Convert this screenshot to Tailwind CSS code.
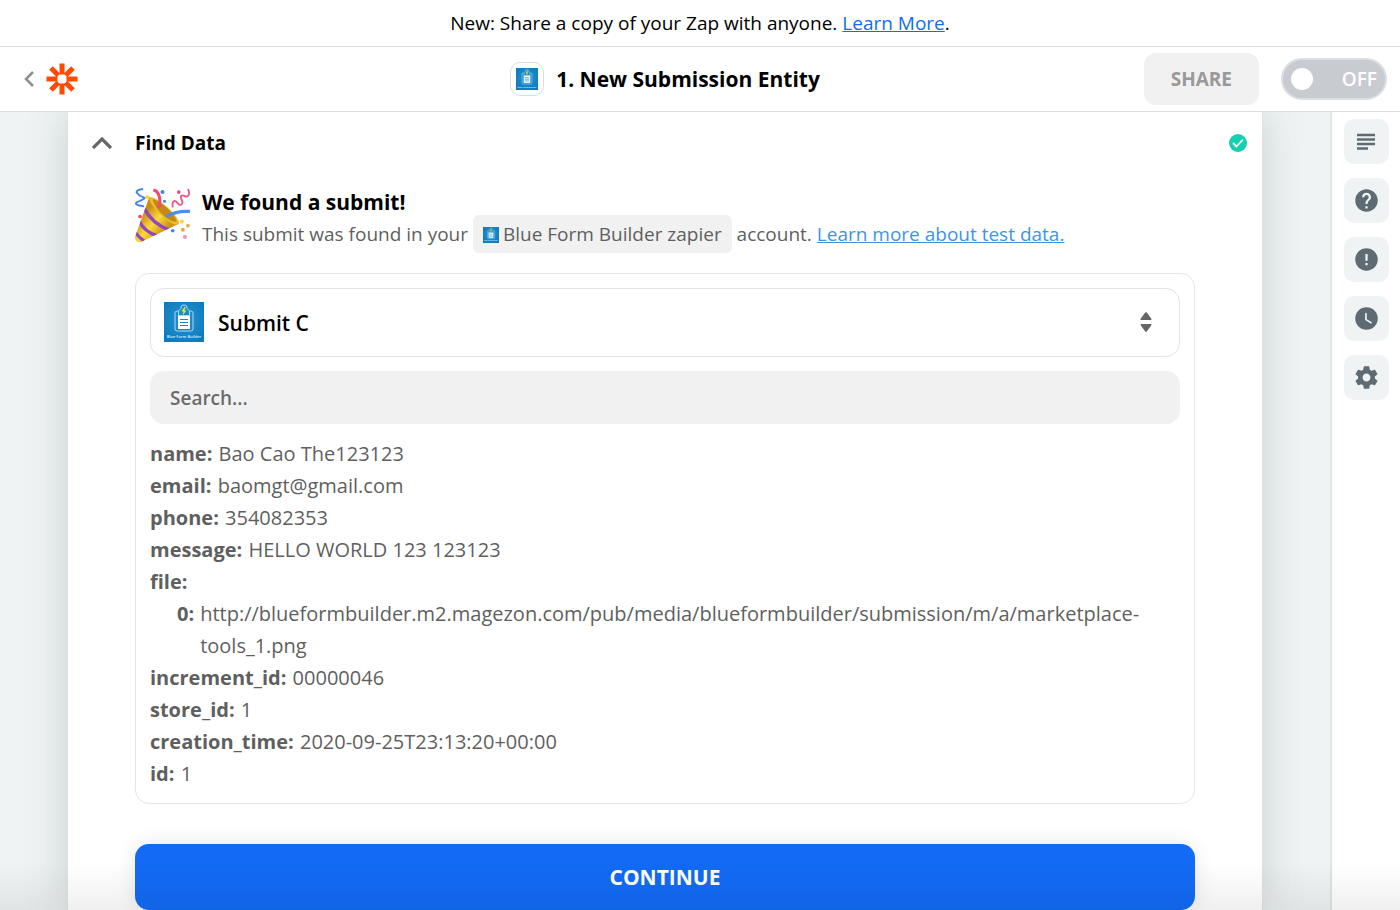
<!DOCTYPE html>
<html lang="en">
  <head>
    <meta charset="UTF-8" />
    <meta name="viewport" content="width=device-width, initial-scale=1.0" />
    <title>New Submission Entity | Zapier</title>
    <script src="https://cdn.jsdelivr.net/npm/@tailwindcss/browser@4"></script>
  </head>
  <body
    class="flex min-h-screen flex-col overflow-x-hidden bg-[#eff3f4] font-['Open_Sans','Liberation_Sans',sans-serif] text-[20px] leading-8 text-black"
  >
    <!-- SHARED ICONS -->
    <svg class="absolute size-0" aria-hidden="true">
      <defs>
        <radialGradient id="logo-bg" cx="50%" cy="45%" r="65%">
          <stop offset="0" stop-color="#2493d3" />
          <stop offset="1" stop-color="#0d7abb" />
        </radialGradient>
      </defs>
      <symbol id="form-logo" viewBox="0 0 40 40">
        <rect width="40" height="40" fill="url(#logo-bg)" />
        <path
          d="M14 9h-1a2 2 0 0 0-2 2v16a2 2 0 0 0 2 2h14a2 2 0 0 0 2-2V11a2 2 0 0 0-2-2h-1"
          fill="none"
          stroke="#a9dbf5"
        />
        <path d="M14 13h12v14H14z" fill="#fff" />
        <path
          d="M14.5 13.5V9L17 6.500V5q0-2 3-2t3 2v1.500L25.500 9v4.500z"
          fill="#1d8bcb"
          stroke="#a9dbf5"
        />
        <path d="M20.500 5 17.500 9.500h2l-.8 4 3.600-5h-2L21.600 5z" fill="#f4ea2a" />
        <path d="M16 17.500h8M16 20.500h8M16 23.500h8" stroke="#1b87c7" stroke-width="1.200" />
        <text
          x="20"
          y="36"
          text-anchor="middle"
          font-family="Open Sans, sans-serif"
          font-size="4"
          font-weight="600"
          fill="#d4effc"
        >
          Blue Form Builder
        </text>
      </symbol>
    </svg>

    <!-- BANNER -->
    <div class="border-b border-[#d9dfe2] bg-white py-[7px] text-center text-[19px]">
      New: Share a copy of your Zap with anyone.
      <a href="#" class="text-[#136bf5] underline">Learn More</a>.
    </div>

    <!-- HEADER -->
    <header class="relative z-10 flex h-[65px] items-center border-b border-[#d9dfe2] bg-white pr-[13px] pl-6">
      <div class="flex flex-1 items-center gap-3">
        <a href="#" aria-label="Back">
          <svg class="h-4 w-[10px]" viewBox="0 0 10 16" fill="none" stroke="#8f8f8f" stroke-width="2.5">
            <path d="M9 1 2 8l7 7" />
          </svg>
        </a>
        <a href="#" aria-label="Zapier">
          <svg class="size-8" viewBox="0 0 32 32" stroke="#ff4a00" stroke-width="5">
            <path
              d="M16 .5v11M16 20.500v11M.5 16h11M20.500 16h11M5 5l7.500 7.500M19.500 19.500 27 27M27 5l-7.500 7.500M12.500 19.500 5 27"
            />
            <rect x="12" y="12" width="8" height="8" rx="2" fill="#fff" stroke="none" />
          </svg>
        </a>
      </div>
      <div class="flex items-center gap-3">
        <span class="flex size-[34px] items-center justify-center rounded-[10px] border border-[#d9dfe2]">
          <svg class="size-[22px]"><use href="#form-logo" /></svg>
        </span>
        <h1 class="text-[21px] font-bold">1. New Submission Entity</h1>
      </div>
      <!-- extra left padding keeps the title centred over the step panel -->
      <div class="flex flex-1 items-center justify-end gap-[22px] pl-[81px]">
        <button
          type="button"
          class="h-[52px] rounded-xl bg-[#f1f1f1] px-[27px] text-[19px] font-bold text-[#999]"
        >
          SHARE
        </button>
        <label
          class="flex h-[42px] w-[106px] cursor-pointer items-center justify-between rounded-full border-2 border-[#d9dfe2] bg-[#c8ccd0] px-2 text-[19px] font-semibold text-white"
        >
          <input type="checkbox" class="size-[22px] appearance-none rounded-full bg-white" />
          OFF
        </label>
      </div>
    </header>

    <div class="flex flex-1">
      <!-- STEP PANEL -->
      <main
        class="mx-[68px] min-w-0 flex-1 bg-white px-[67px] shadow-[0_0_40px_rgba(60,80,85,0.22)] outline outline-[#dde3e5]"
      >
        <section>
          <div class="-mr-[52px] -ml-[43px] flex h-[62px] items-center">
            <button type="button" class="mr-[23px] flex w-5 justify-center" aria-label="Collapse">
              <svg class="h-3 w-5" viewBox="0 0 20 12" fill="none" stroke="#666" stroke-width="3.2">
                <path d="m1 11 9-9 9 9" />
              </svg>
            </button>
            <h2 class="flex-1 text-[19px] font-bold">Find Data</h2>
            <svg class="size-[18px]" viewBox="0 0 18 18">
              <circle cx="9" cy="9" r="9" fill="#13d0af" />
              <path d="m4 9 3.500 3.500L14 5.500" fill="none" stroke="#fff" stroke-width="1.8" />
            </svg>
          </div>

          <div class="flex gap-3 pt-3">
            <svg class="mt-[2px] size-[55px] shrink-0" viewBox="0 0 54 54" fill="none">
              <defs>
                <linearGradient id="cone" x1="6" y1="28" x2="26" y2="46" gradientUnits="userSpaceOnUse">
                  <stop stop-color="#c98d14" />
                  <stop offset=".5" stop-color="#fbd93c" />
                  <stop offset="1" stop-color="#cf9210" />
                </linearGradient>
                <clipPath id="cone-clip">
                  <path d="M14 9 43 35 6 53Q0 54 0 48Z" />
                </clipPath>
              </defs>
              <path d="M14 9 43 35 6 53Q0 54 0 48Z" fill="url(#cone)" />
              <g clip-path="url(#cone-clip)" stroke="#9145c4" stroke-width="3.2">
                <path d="M9 20q8 15 24 21" />
                <path d="M4 32q5 11 18 15" />
                <path d="M0 43q4 6 9 9" />
              </g>
              <path d="M14 9C21 7 45 29 43 35C38 41 12 16 14 9Z" fill="#efbb2c" />
              <path d="M17 11C24 11 40 26 41 33C33 34 20 21 17 11Z" fill="#c58a16" />
              <path d="M23 20C26 12 24 3 18 2" stroke="#f04b70" stroke-width="3" />
              <path d="M31 28q10-6 23-5" stroke="#4a8ff0" stroke-width="3.2" />
              <path d="M8 1Q0 2 2 5t6 4-4 4 5 5" stroke="#3a82ea" stroke-width="1.8" />
              <path d="M37 19c-1-8 3-7 5-4s6 1 4-3-1-6 3-4 5-3 3-7" stroke="#e85a82" stroke-width="1.8" />
              <g fill="#3988f1">
                <circle cx="27" cy="4" r="2" />
                <circle cx="29" cy="13" r="1.500" />
                <circle cx="37" cy="42" r="1.800" />
              </g>
              <g fill="#ee4773">
                <circle cx="43" cy="4" r="1.800" />
                <circle cx="5" cy="28" r="1.800" />
              </g>
              <g fill="#f9d441">
                <circle cx="12" cy="9" r="2" />
                <circle cx="46" cy="33" r="2" />
              </g>
              <g fill="#eba735">
                <circle cx="47" cy="41" r="2" />
                <circle cx="52" cy="37" r="1.800" />
              </g>
              <circle cx="49" cy="48" r="2" fill="#f497b8" />
            </svg>
            <div class="text-[#5f5f5f]">
              <h3 class="text-[21px] font-bold text-black">We found a submit!</h3>
              <p class="text-[19px]">
                This submit was found in your
                <span class="rounded-md bg-[#f1f1f1] px-[10px] py-[6px]"
                  ><svg class="mr-1 inline size-4 align-[-2px]"><use href="#form-logo" /></svg>Blue Form Builder zapier</span
                >
                account.
                <a href="#" class="text-[#3e95e6] underline">Learn more about test data.</a>
              </p>
            </div>
          </div>

          <div class="mt-[23px] rounded-[14px] border border-[#e6e6e6] px-[14px] pt-[14px] pb-[13px]">
            <div class="relative">
              <select
                aria-label="Test submit"
                class="block h-[69px] w-full appearance-none rounded-[14px] border border-[#e3e3e3] bg-white pl-[67px] text-[21px] font-semibold"
              >
                <option>Submit C</option>
              </select>
              <svg class="pointer-events-none absolute top-[14px] left-[14px] size-10">
                <use href="#form-logo" />
              </svg>
              <svg class="pointer-events-none absolute top-6 right-7 h-5 w-3" viewBox="0 0 12 20" fill="#666">
                <path
                  d="M5.200.6q.8-.8 1.600 0l4.400 6q.8 1.400-.6 1.400H1.400q-1.400 0-.6-1.400zM5.200 19.400q.8.800 1.600 0l4.400-6q.8-1.400-.6-1.400H1.400q-1.400 0-.6 1.400z"
                />
              </svg>
            </div>
            <input
              type="search"
              aria-label="Search"
              placeholder="Search..."
              class="my-[14px] block h-[53px] w-full rounded-[14px] bg-[#f1f1f1] px-5 text-[19px] font-semibold placeholder:text-[#6b6b6b]"
            />
            <ul class="text-[#5f5f5f] [&>li>b]:mr-px">
              <li><b>name:</b> Bao Cao The123123</li>
              <li><b>email:</b> baomgt@gmail.com</li>
              <li><b>phone:</b> 354082353</li>
              <li><b>message:</b> HELLO WORLD 123 123123</li>
              <li>
                <b>file:</b>
                <div class="flex gap-[6px] pl-[27px]">
                  <b>0:</b>
                  <span class="min-w-0 wrap-break-word"
                    >http://blueformbuilder.m2.magezon.com/pub/media/blueformbuilder/submission/m/a/marketplace-tools_1.png</span
                  >
                </div>
              </li>
              <li><b>increment_id:</b> 00000046</li>
              <li><b>store_id:</b> 1</li>
              <li><b>creation_time:</b> 2020-09-25T23:13:20+00:00</li>
              <li><b>id:</b> 1</li>
            </ul>
          </div>

          <button
            type="button"
            class="mt-10 block h-[66px] w-full rounded-[14px] bg-[#136bf5] text-[21px] font-bold text-white shadow-[0_0_20px_rgba(0,0,0,0.1)]"
          >
            CONTINUE
          </button>
        </section>
      </main>

      <!-- SIDEBAR -->
      <nav class="flex w-[70px] shrink-0 flex-col items-center gap-[14px] border-l-2 border-[#dfe4e6] bg-white pt-[7px]">
        <button type="button" aria-label="Outline" class="flex size-[45px] items-center justify-center rounded-[10px] bg-[#eff3f4]">
          <svg class="size-6" viewBox="0 0 24 24" stroke="#5f6b72" stroke-width="2.4">
            <path d="M3 5h18M3 9.500h18M3 14h18M3 18.500h11" />
          </svg>
        </button>
        <button type="button" aria-label="Help" class="flex size-[45px] items-center justify-center rounded-[10px] bg-[#eff3f4]">
          <svg class="size-[27px]" viewBox="0 0 24 24" fill="#5f6b72">
            <path
              d="M12 2C6.480 2 2 6.480 2 12s4.480 10 10 10 10-4.480 10-10S17.520 2 12 2zm1 17h-2v-2h2v2zm2.070-7.750-.9.920C13.450 12.900 13 13.500 13 15h-2v-.5c0-1.100.45-2.100 1.170-2.830l1.240-1.260c.37-.36.590-.86.590-1.410 0-1.100-.9-2-2-2s-2 .9-2 2H8c0-2.210 1.790-4 4-4s4 1.790 4 4c0 .88-.36 1.680-.93 2.250z"
            />
          </svg>
        </button>
        <button type="button" aria-label="Alerts" class="flex size-[45px] items-center justify-center rounded-[10px] bg-[#eff3f4]">
          <svg class="size-[27px]" viewBox="0 0 24 24" fill="#5f6b72">
            <path
              d="M12 2C6.480 2 2 6.480 2 12s4.480 10 10 10 10-4.480 10-10S17.520 2 12 2zm1 15h-2v-2h2v2zm0-4h-2V7h2v6z"
            />
          </svg>
        </button>
        <button type="button" aria-label="History" class="flex size-[45px] items-center justify-center rounded-[10px] bg-[#eff3f4]">
          <svg class="size-[27px]" viewBox="0 0 24 24">
            <circle cx="12" cy="12" r="10" fill="#5f6b72" />
            <path d="M11.500 7v6l5 3" fill="none" stroke="#eff3f4" stroke-width="1.5" />
          </svg>
        </button>
        <button type="button" aria-label="Settings" class="flex size-[45px] items-center justify-center rounded-[10px] bg-[#eff3f4]">
          <svg class="size-[27px]" viewBox="0 0 24 24" fill="#5f6b72">
            <path
              d="M19.430 12.980c.04-.32.07-.64.07-.98s-.03-.66-.07-.98l2.110-1.650c.19-.15.240-.42.120-.64l-2-3.460c-.12-.22-.39-.3-.61-.22l-2.490 1c-.52-.4-1.080-.73-1.690-.98l-.38-2.650C14.460 2.180 14.250 2 14 2h-4c-.25 0-.46.180-.49.420l-.38 2.650c-.61.250-1.170.590-1.690.98l-2.490-1c-.23-.09-.49 0-.61.220l-2 3.460c-.13.220-.07.490.12.640l2.110 1.650c-.04.320-.07.650-.07.980s.03.660.07.980l-2.110 1.650c-.19.150-.24.420-.12.640l2 3.460c.12.220.39.300.61.220l2.490-1c.52.400 1.080.730 1.690.980l.38 2.650c.03.240.24.420.49.420h4c.25 0 .46-.18.490-.42l.38-2.650c.61-.25 1.170-.59 1.690-.98l2.490 1c.23.090.49 0 .61-.22l2-3.460c.12-.22.070-.49-.12-.64l-2.110-1.650zM12 15.500c-1.930 0-3.500-1.570-3.500-3.500s1.570-3.500 3.500-3.500 3.500 1.570 3.500 3.500-1.570 3.500-3.500 3.500z"
            />
          </svg>
        </button>
      </nav>
    </div>

    <!-- fade along the bottom edge of the window -->
    <div class="pointer-events-none fixed inset-x-0 bottom-0 h-12 bg-linear-to-b from-black/0 to-black/6"></div>
  </body>
</html>
